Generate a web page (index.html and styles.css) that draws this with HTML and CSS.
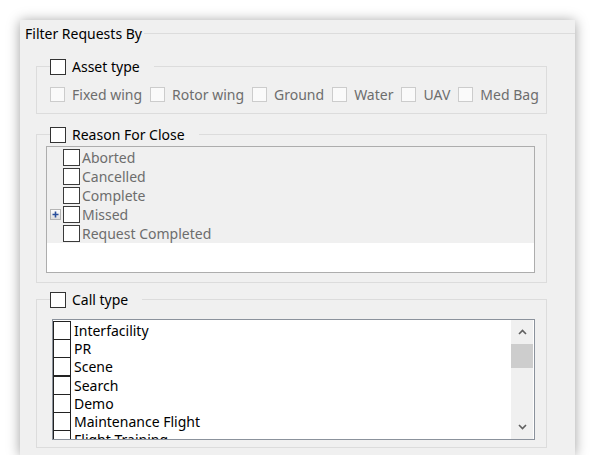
FILE: index.html
```html
<!DOCTYPE html>
<html>
<head>
<meta charset="utf-8">
<link rel="stylesheet" href="styles.css">
</head>
<body>
<div class="panel">
  <div class="title-row"><span class="title">Filter Requests By</span><span class="rule"></span></div>

  <fieldset class="group group-asset">
    <legend class="legend"><span class="cb"></span><span>Asset type</span></legend>
    <div class="asset-row">
      <label class="opt"><span class="cb cb-dis"></span><span>Fixed wing</span></label>
      <label class="opt"><span class="cb cb-dis"></span><span>Rotor wing</span></label>
      <label class="opt"><span class="cb cb-dis"></span><span>Ground</span></label>
      <label class="opt"><span class="cb cb-dis"></span><span>Water</span></label>
      <label class="opt"><span class="cb cb-dis"></span><span>UAV</span></label>
      <label class="opt"><span class="cb cb-dis"></span><span>Med Bag</span></label>
    </div>
  </fieldset>

  <fieldset class="group group-reason">
    <legend class="legend"><span class="cb"></span><span>Reason For Close</span></legend>
    <div class="tree">
      <div class="tree-rows">
        <div class="tree-row"><span class="expander"></span><span class="cb cb-tree"></span><span>Aborted</span></div>
        <div class="tree-row"><span class="expander"></span><span class="cb cb-tree"></span><span>Cancelled</span></div>
        <div class="tree-row"><span class="expander"></span><span class="cb cb-tree"></span><span>Complete</span></div>
        <div class="tree-row"><span class="expander"><svg class="plus" width="11" height="11" viewBox="0 0 11 11"><defs><linearGradient id="pg" x1="0" y1="0" x2="0" y2="1"><stop offset="0" stop-color="#ffffff"/><stop offset="1" stop-color="#dcdcdc"/></linearGradient></defs><rect x="0.5" y="0.5" width="10" height="10" fill="url(#pg)" stroke="#b4b4b4"/><path d="M2.5 5.5h6M5.5 2.5v6" stroke="#2a4f9c" stroke-width="1.6"/></svg></span><span class="cb cb-tree"></span><span>Missed</span></div>
        <div class="tree-row"><span class="expander"></span><span class="cb cb-tree"></span><span>Request Completed</span></div>
      </div>
    </div>
  </fieldset>

  <fieldset class="group group-call">
    <legend class="legend"><span class="cb"></span><span>Call type</span></legend>
    <div class="listbox">
      <div class="list-items">
        <div class="list-row"><span class="cb cb-list"></span><span>Interfacility</span></div>
        <div class="list-row"><span class="cb cb-list"></span><span>PR</span></div>
        <div class="list-row"><span class="cb cb-list"></span><span>Scene</span></div>
        <div class="list-row"><span class="cb cb-list"></span><span>Search</span></div>
        <div class="list-row"><span class="cb cb-list"></span><span>Demo</span></div>
        <div class="list-row"><span class="cb cb-list"></span><span>Maintenance Flight</span></div>
        <div class="list-row"><span class="cb cb-list"></span><span>Flight Training</span></div>
      </div>
      <div class="scrollbar">
        <div class="sb-btn"><svg width="9" height="6" viewBox="0 0 9 6"><path d="M1 5L4.5 1.5L8 5" fill="none" stroke="#606060" stroke-width="1.6"/></svg></div>
        <div class="sb-thumb"></div>
        <div class="sb-track"></div>
        <div class="sb-btn"><svg width="9" height="6" viewBox="0 0 9 6"><path d="M1 1L4.5 4.5L8 1" fill="none" stroke="#606060" stroke-width="1.6"/></svg></div>
      </div>
    </div>
  </fieldset>
</div>
</body>
</html>
```

FILE: styles.css
```css
html, body {
  margin: 0;
  padding: 0;
  background: #ffffff;
}

body {
  font-family: "Noto Sans", "Open Sans", sans-serif;
  font-size: 14px;
  color: #000;
}

.panel {
  margin: 20px 0 0 20px;
  width: 555px;
  height: 435px;
  box-sizing: border-box;
  background: #f0f0f0;
  box-shadow: 0 1px 12px rgba(0, 0, 0, 0.38);
  padding: 4px 0 0 0;
  overflow: hidden;
}

.title-row {
  display: flex;
  align-items: center;
  height: 18px;
  padding-left: 5px;
}

.title {
  white-space: nowrap;
}

.rule {
  flex: 1;
  margin-left: 2px;
  border-top: 1px solid #dcdcdc;
}

.group {
  margin: 0 28px 0 16px;
  padding: 0;
  border: 1px solid #dcdcdc;
  min-width: 0;
}

.group-asset { margin-top: 16px; }
.group-reason { margin-top: 12px; }
.group-call { margin-top: 8px; }

.legend {
  display: flex;
  align-items: center;
  gap: 6px;
  height: 17px;
  padding: 0 14px 0 0;
  margin-left: 13px;
  white-space: nowrap;
}

.cb {
  display: inline-block;
  box-sizing: border-box;
  width: 16px;
  height: 16px;
  border: 1px solid #333333;
  background: #ffffff;
  flex: none;
}

.asset-row {
  display: flex;
  align-items: center;
  height: 18px;
  margin: 10px 0 10px 13px;
  gap: 8px;
  color: #6d6d6d;
}

.opt {
  display: flex;
  align-items: center;
  gap: 7px;
  white-space: nowrap;
}

.cb-dis {
  width: 15px;
  height: 15px;
  border-color: #cccccc;
  background: #fafafa;
}

.tree {
  margin: 3px 11px 9px 9px;
  height: 127px;
  box-sizing: border-box;
  border: 1px solid #adadad;
  background: #ffffff;
}

.tree-rows {
  background: #f0f0f0;
  color: #6d6d6d;
  padding-top: 1px;
}

.tree-row {
  display: flex;
  align-items: center;
  height: 19px;
  padding-left: 3px;
  white-space: nowrap;
}

.expander {
  display: flex;
  align-items: center;
  width: 11px;
  height: 11px;
  margin-right: 2px;
  flex: none;
}

.plus {
  display: block;
}

.cb-tree {
  width: 17px;
  height: 17px;
  border: 1px solid #3a3a3a;
  margin-right: 2px;
}

.listbox {
  display: flex;
  margin: 11px 11px 7px 15px;
  height: 121px;
  box-sizing: border-box;
  border: 1px solid #8b929c;
  background: #ffffff;
}

.list-items {
  flex: 1;
  overflow: hidden;
  padding-top: 1px;
}

.list-row {
  display: flex;
  align-items: center;
  height: 18.3px;
  white-space: nowrap;
}

.cb-list {
  width: 18px;
  height: 19px;
  border: 1px solid #222222;
  margin-right: 3px;
}

.scrollbar {
  display: flex;
  flex-direction: column;
  width: 22px;
  margin-right: 1px;
  background: #f0f0f0;
}

.sb-btn {
  height: 24px;
  display: flex;
  align-items: center;
  justify-content: center;
  flex: none;
}

.sb-thumb {
  height: 24px;
  background: #cdcdcd;
  flex: none;
}

.sb-track {
  flex: 1;
}
```
